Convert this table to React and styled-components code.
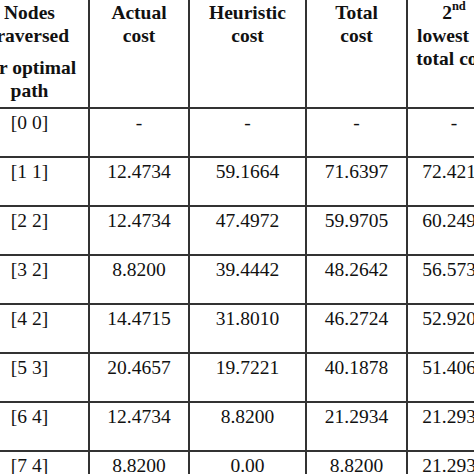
import React from "react";
import styled, { createGlobalStyle } from "styled-components";

const Global = createGlobalStyle`
  html, body { margin: 0; padding: 0; background: #fff; }
  body { width: 474px; height: 474px; overflow: hidden; }
`;

const Page = styled.div`
  width: 474px;
  height: 474px;
  overflow: hidden;
  background: #fff;
`;

const Table = styled.table`
  border-collapse: collapse;
  table-layout: fixed;
  width: 531px;
  margin-left: -31px;
  margin-top: -12px;
  font-family: "Liberation Serif", "Times New Roman", serif;
  font-size: 19.5px;
  line-height: 23px;
  color: #111;
`;

const HeadCell = styled.th`
  border: 2px solid #333;
  vertical-align: top;
  text-align: center;
  font-weight: bold;
  padding: 11px 3px 0;
  height: 119px;
  box-sizing: border-box;
`;

const Cell = styled.td`
  border: 2px solid #333;
  vertical-align: top;
  text-align: center;
  padding: 2px 3px 0;
  height: 49px;
  box-sizing: border-box;
  white-space: nowrap;
`;

const Line = styled.span`
  display: block;
  margin-top: ${(p) => (p.$gap ? `${p.$gap}px` : "0")};
  padding-right: ${(p) => (p.$shift ? `${p.$shift}px` : "0")};
  white-space: nowrap;
`;

const Sup = styled.sup`
  font-size: 12.5px;
  line-height: 0;
  vertical-align: 9px;
`;

const rows = [
  ["[0 0]", "-", "-", "-", "-"],
  ["[1 1]", "12.4734", "59.1664", "71.6397", "72.4210"],
  ["[2 2]", "12.4734", "47.4972", "59.9705", "60.2491"],
  ["[3 2]", "8.8200", "39.4442", "48.2642", "56.5731"],
  ["[4 2]", "14.4715", "31.8010", "46.2724", "52.9201"],
  ["[5 3]", "20.4657", "19.7221", "40.1878", "51.4066"],
  ["[6 4]", "12.4734", "8.8200", "21.2934", "21.2934"],
  ["[7 4]", "8.8200", "0.00", "8.8200", "21.2934"],
];

export default function App() {
  return (
    <Page>
      <Global />
      <Table>
        <colgroup>
          <col style={{ width: 119 }} />
          <col style={{ width: 100 }} />
          <col style={{ width: 117 }} />
          <col style={{ width: 101 }} />
          <col style={{ width: 94 }} />
        </colgroup>
        <thead>
          <tr>
            <HeadCell>
              <Line>Nodes</Line>
              <Line>traversed</Line>
              <Line $gap={9}>for optimal</Line>
              <Line>path</Line>
            </HeadCell>
            <HeadCell>
              <Line>Actual</Line>
              <Line>cost</Line>
            </HeadCell>
            <HeadCell>
              <Line>Heuristic</Line>
              <Line>cost</Line>
            </HeadCell>
            <HeadCell>
              <Line>Total</Line>
              <Line>cost</Line>
            </HeadCell>
            <HeadCell>
              <Line>
                2<Sup>nd</Sup>
              </Line>
              <Line $shift={22}>lowest</Line>
              <Line>total cost</Line>
            </HeadCell>
          </tr>
        </thead>
        <tbody>
          {rows.map((r) => (
            <tr key={r[0]}>
              {r.map((v, i) => (
                <Cell key={i}>{v}</Cell>
              ))}
            </tr>
          ))}
        </tbody>
      </Table>
    </Page>
  );
}
